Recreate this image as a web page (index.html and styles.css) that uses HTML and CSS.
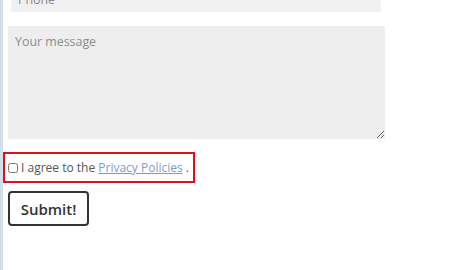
FILE: index.html
```html
<!DOCTYPE html>
<html>
<head>
<meta charset="utf-8">
<link rel="stylesheet" href="styles.css">
</head>
<body>
<div class="page">
  <form class="form">
    <input class="phone" type="text" placeholder="Phone">
    <textarea class="message" placeholder="Your message"></textarea>
    <div class="agree">
      <input class="check" type="checkbox">
      <span class="agree-text">I agree to the <a href="#">Privacy Policies</a> .</span>
    </div>
    <button class="submit" type="button">Submit!</button>
  </form>
</div>
</body>
</html>
```

FILE: styles.css
```css
html, body {
  margin: 0;
  padding: 0;
  background: #fff;
}
.page {
  height: 270px;
  overflow: hidden;
  border-left: 3px solid #d5dde9;
  font-family: "Open Sans", "Liberation Sans", sans-serif;
}
.form {
  display: flex;
  flex-direction: column;
  align-items: flex-start;
  padding-left: 5px;
  margin-top: -22px;
}
.phone {
  box-sizing: border-box;
  width: 370px;
  height: 34px;
  margin-left: 3px;
  border: 1px solid #f3f3f3;
  background: #f0f0f0;
  padding: 9px 6px 0;
  font-family: inherit;
  font-size: 12.4px;
  color: #888;
  outline: none;
}
.phone::placeholder { color: #8a8a8a; }
.message {
  box-sizing: border-box;
  width: 377px;
  height: 113px;
  margin-top: 14px;
  border: none;
  background: #eeeeee;
  padding: 7px 7px;
  font-family: inherit;
  font-size: 12.4px;
  line-height: 18px;
  color: #888;
  outline: none;
}
.message::placeholder { color: #8d8d8d; }
.agree {
  display: flex;
  align-items: center;
  box-sizing: border-box;
  height: 31px;
  margin-top: 13px;
  margin-left: -5px;
  padding: 0 4px 0 3px;
  border: 2px solid #d8121f;
}
.check {
  margin: 0 3px 0 0;
  width: 10px;
  height: 10px;
}
.agree-text {
  font-size: 12px;
  color: #555;
  white-space: pre;
}
.agree-text a {
  color: #7f9ccc;
  text-decoration: underline;
}
.submit {
  box-sizing: border-box;
  margin-top: 8px;
  width: 81px;
  height: 35px;
  border: 2px solid #333;
  border-radius: 4px;
  background: #fff;
  font-family: inherit;
  font-size: 15px;
  font-weight: 600;
  color: #333;
  padding: 0;
}
```
